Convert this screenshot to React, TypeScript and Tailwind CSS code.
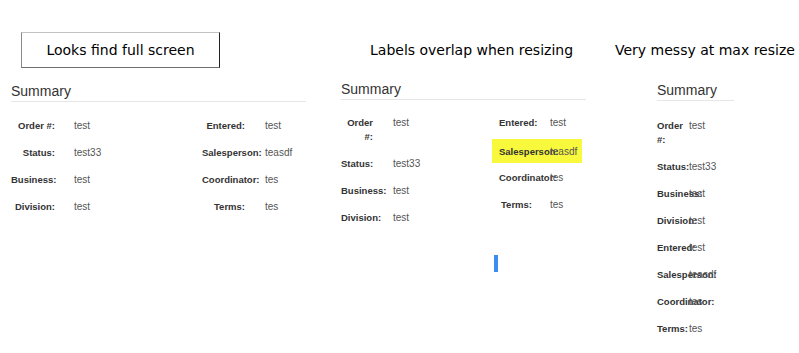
import React from "react";

type Field = { label: string; value: string };

const leftFields: Field[] = [
    { label: "Order #:", value: "test" },
    { label: "Status:", value: "test33" },
    { label: "Business:", value: "test" },
    { label: "Division:", value: "test" },
];

const rightFields: Field[] = [
    { label: "Entered:", value: "test" },
    { label: "Salesperson:", value: "teasdf" },
    { label: "Coordinator:", value: "tes" },
    { label: "Terms:", value: "tes" },
];

const sans = "font-['Liberation_Sans',Arial,sans-serif]";
const verdana = "font-['DejaVu_Sans',Verdana,sans-serif]";

interface RowProps {
    field: Field;
    labelClass: string;
    valueClass: string;
}

const Row: React.FC<RowProps> = ({ field, labelClass, valueClass }) => (
    <div className="flex items-start mb-[13px]">
        <span className={`shrink-0 font-bold text-[9.5px] leading-[14px] text-[#333] ${labelClass}`}>
            {field.label}
        </span>
        <span className={`text-[10px] leading-[14px] text-[#555] ${valueClass}`}>{field.value}</span>
    </div>
);

const Heading: React.FC<{ className: string }> = ({ className }) => (
    <div
        className={`${sans} text-[14px] leading-[16px] pb-[2px] border-b border-[#e6e6e6] text-[#333] ${className}`}
    >
        Summary
    </div>
);

export default function App() {
    return (
        <div className={`flex w-[799px] h-[353px] bg-white overflow-hidden ${sans}`}>
            {/* Full screen */}
            <div className="w-[330px] shrink-0">
                <div className="mt-[32px] ml-[21px] w-[199px] h-[36px] flex items-center justify-center border border-t-[#c2c2c2] border-l-[#8a8a8a] border-r-[#222] border-b-[#6f6f6f]">
                    <span className={`${verdana} text-[14px] text-black`}>Looks find full screen</span>
                </div>
                <Heading className="ml-[11px] w-[295px] mt-[15px]" />
                <div className="ml-[11px] w-[295px] flex mt-[17px]">
                    <div className="w-[191px] shrink-0">
                        {leftFields.map((f) => (
                            <Row key={f.label} field={f} labelClass="w-[44px] text-right" valueClass="ml-[19px]" />
                        ))}
                    </div>
                    <div>
                        {rightFields.map((f) => (
                            <Row
                                key={f.label}
                                field={f}
                                labelClass="w-[43px] text-right whitespace-nowrap"
                                valueClass="ml-[20px]"
                            />
                        ))}
                    </div>
                </div>
            </div>

            {/* Resizing */}
            <div className="w-[270px] shrink-0">
                <div className="mt-[32px] h-[36px] flex items-center pl-[40px]">
                    <span className={`${verdana} text-[14px] text-black whitespace-nowrap`}>
                        Labels overlap when resizing
                    </span>
                </div>
                <Heading className="ml-[11px] w-[245px] mt-[13px]" />
                <div className="ml-[11px] flex mt-[16px]">
                    <div className="w-[158px] shrink-0">
                        {leftFields.map((f) => (
                            <Row key={f.label} field={f} labelClass="w-[32px] text-right" valueClass="ml-[20px]" />
                        ))}
                    </div>
                    <div>
                        <Row field={rightFields[0]} labelClass="w-[33px] text-right" valueClass="ml-[18px]" />
                        <div className="-ml-[7px] -mt-[4px] mb-[8px] w-[90px] pl-[7px] pt-[6px] pb-[4px] bg-[#f8f83c]">
                            <div className="flex items-start">
                                <span className="shrink-0 w-[33px] font-bold text-[9.5px] leading-[14px] text-[#333] whitespace-nowrap">
                                    Salesperson:
                                </span>
                                <span className="ml-[18px] relative text-[10px] leading-[14px] text-[#555]">
                                    teasdf
                                </span>
                            </div>
                        </div>
                        <Row field={rightFields[2]} labelClass="w-[33px] text-right" valueClass="ml-[18px] relative" />
                        <Row field={rightFields[3]} labelClass="w-[33px] text-right" valueClass="ml-[18px]" />
                        <div className="mt-[43px] -ml-[5px] w-[4px] h-[17px] bg-[#3b8ef0]" />
                    </div>
                </div>
            </div>

            {/* Max resize */}
            <div className="flex-1 min-w-0">
                <div className="mt-[32px] h-[36px] flex items-center pl-[15px]">
                    <span className={`${verdana} text-[14px] text-black whitespace-nowrap`}>
                        Very messy at max resize
                    </span>
                </div>
                <Heading className="ml-[57px] w-[77px] mt-[14px]" />
                <div className="ml-[57px] mt-[18px]">
                    {[...leftFields, ...rightFields].map((f) => (
                        <Row key={f.label} field={f} labelClass="w-[26px] text-left" valueClass="ml-[6px] relative" />
                    ))}
                </div>
            </div>
        </div>
    );
}
